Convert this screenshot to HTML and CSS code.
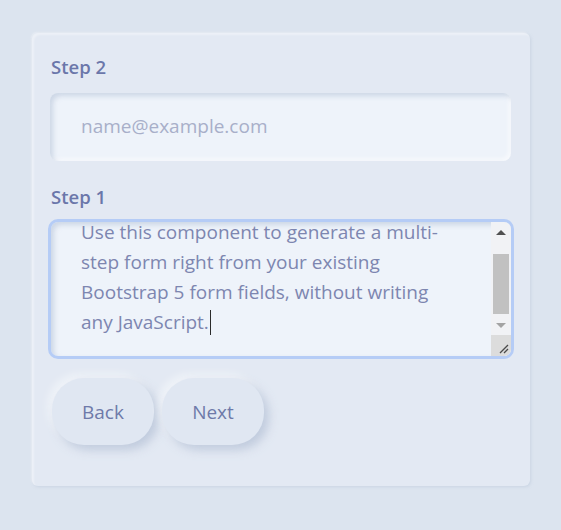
FILE: index.html
```
<!DOCTYPE html>
<html lang="en">
<head>
<meta charset="utf-8">
<title>Multi-step form</title>
<link rel="stylesheet" href="styles.css">
</head>
<body>
<div class="card">
  <label class="label" for="email">Step 2</label>
  <input class="field" id="email" type="text" placeholder="name@example.com">
  <label class="label label-2" for="msg">Step 1</label>
  <div class="area-wrap">
    <textarea class="area" id="msg">Use this component to generate a multi-step form right from your existing Bootstrap 5 form fields, without writing any JavaScript.</textarea>
    <span class="caret" aria-hidden="true"></span>
    <div class="sbar" aria-hidden="true">
      <div class="sbtn"><span class="tri up"></span></div>
      <div class="track"><div class="thumb"></div></div>
      <div class="sbtn"><span class="tri down"></span></div>
      <div class="corner">
        <svg width="12" height="12" viewBox="0 0 12 12"><path d="M11 3 L3 11 M11 7 L7 11" stroke="#4a4a4a" stroke-width="1.3" fill="none"/></svg>
      </div>
    </div>
  </div>
  <div class="actions">
    <button class="btn" type="button">Back</button>
    <button class="btn" type="button">Next</button>
  </div>
</div>
<script>
  var t = document.getElementById('msg');
  t.focus();
  t.setSelectionRange(t.value.length, t.value.length);
  t.scrollTop = 25;
</script>
</body>
</html>
```
FILE: styles.css
```
* { box-sizing: border-box; }
html, body { margin: 0; height: 100%; }
body {
  background: #dce4ef;
  font-family: "Open Sans", "Lato", sans-serif;
  padding: 33px 31px 0 32px;
}
.card {
  width: 498px;
  height: 453px;
  background: #e3e9f3;
  border-radius: 6px;
  padding: 20px 16px 0 18px;
  box-shadow: inset 2px 2px 2px rgba(255,255,255,0.35), 1px 1px 3px rgba(170,184,206,0.35), -1px -1px 2px rgba(255,255,255,0.4);
  display: flex;
  flex-direction: column;
}
.label {
  display: block;
  color: #6b77aa;
  font-size: 18.5px;
  font-weight: 600;
  line-height: 27px;
  margin: 0 0 13px 1px;
}
.label-2 { margin-top: 22px; margin-bottom: 9px; }
.field {
  width: 461px;
  height: 68px;
  border: none;
  border-radius: 8px;
  background: #eef3fa;
  padding: 0 30px 2px 31px;
  font-family: inherit;
  font-size: 19px;
  color: #7d86b0;
  box-shadow: inset 3px 3px 5px rgba(184,196,216,0.6), inset -2px -2px 4px rgba(255,255,255,0.7);
  outline: none;
}
.field::placeholder { color: #a8afc9; }
.area-wrap {
  position: relative;
  width: 466px;
  height: 140px;
  margin-left: -2px;
  border: 3px solid #b5ccf6;
  border-radius: 10px;
  background: #eef3fa;
  box-shadow: inset 3px 3px 5px rgba(184,196,216,0.6);
  display: flex;
  overflow: hidden;
}
.area {
  flex: 1;
  min-width: 0;
  height: 134px;
  border: none;
  background: transparent;
  padding: 20px 50px 40px 30px;
  font-family: inherit;
  font-size: 19px;
  line-height: 30px;
  color: #7d86b0;
  caret-color: transparent;
  outline: none;
  resize: none;
  overflow: hidden;
}
.caret {
  position: absolute;
  left: 159px;
  top: 88px;
  width: 1px;
  height: 25px;
  background: #2b2b2b;
}
.sbar {
  width: 20px;
  display: flex;
  flex-direction: column;
  background: #f1f2f5;
}
.sbtn {
  height: 20px;
  display: flex;
  align-items: center;
  justify-content: center;
}
.tri {
  width: 0;
  height: 0;
  border-left: 5px solid transparent;
  border-right: 5px solid transparent;
}
.tri.up { border-bottom: 5px solid #505050; }
.tri.down { border-top: 5px solid #a3a3a3; }
.track {
  flex: 1;
  padding: 12px 2px 0 2px;
}
.thumb {
  height: 60px;
  background: #c1c1c1;
}
.corner {
  height: 21px;
  background: #dcdcdc;
  display: flex;
  align-items: flex-end;
  justify-content: flex-end;
  padding: 0 2px 2px 0;
}
.actions {
  display: flex;
  gap: 8px;
  margin-top: 19px;
  margin-left: 2px;
}
.btn {
  width: 102px;
  height: 67px;
  border: none;
  border-radius: 32px;
  background: #e0e7f2;
  color: #6e7aa9;
  font-family: inherit;
  font-size: 19px;
  font-weight: 500;
  box-shadow: 5px 5px 10px rgba(178,191,212,0.7), -4px -4px 8px rgba(255,255,255,0.5);
  cursor: pointer;
}
```
